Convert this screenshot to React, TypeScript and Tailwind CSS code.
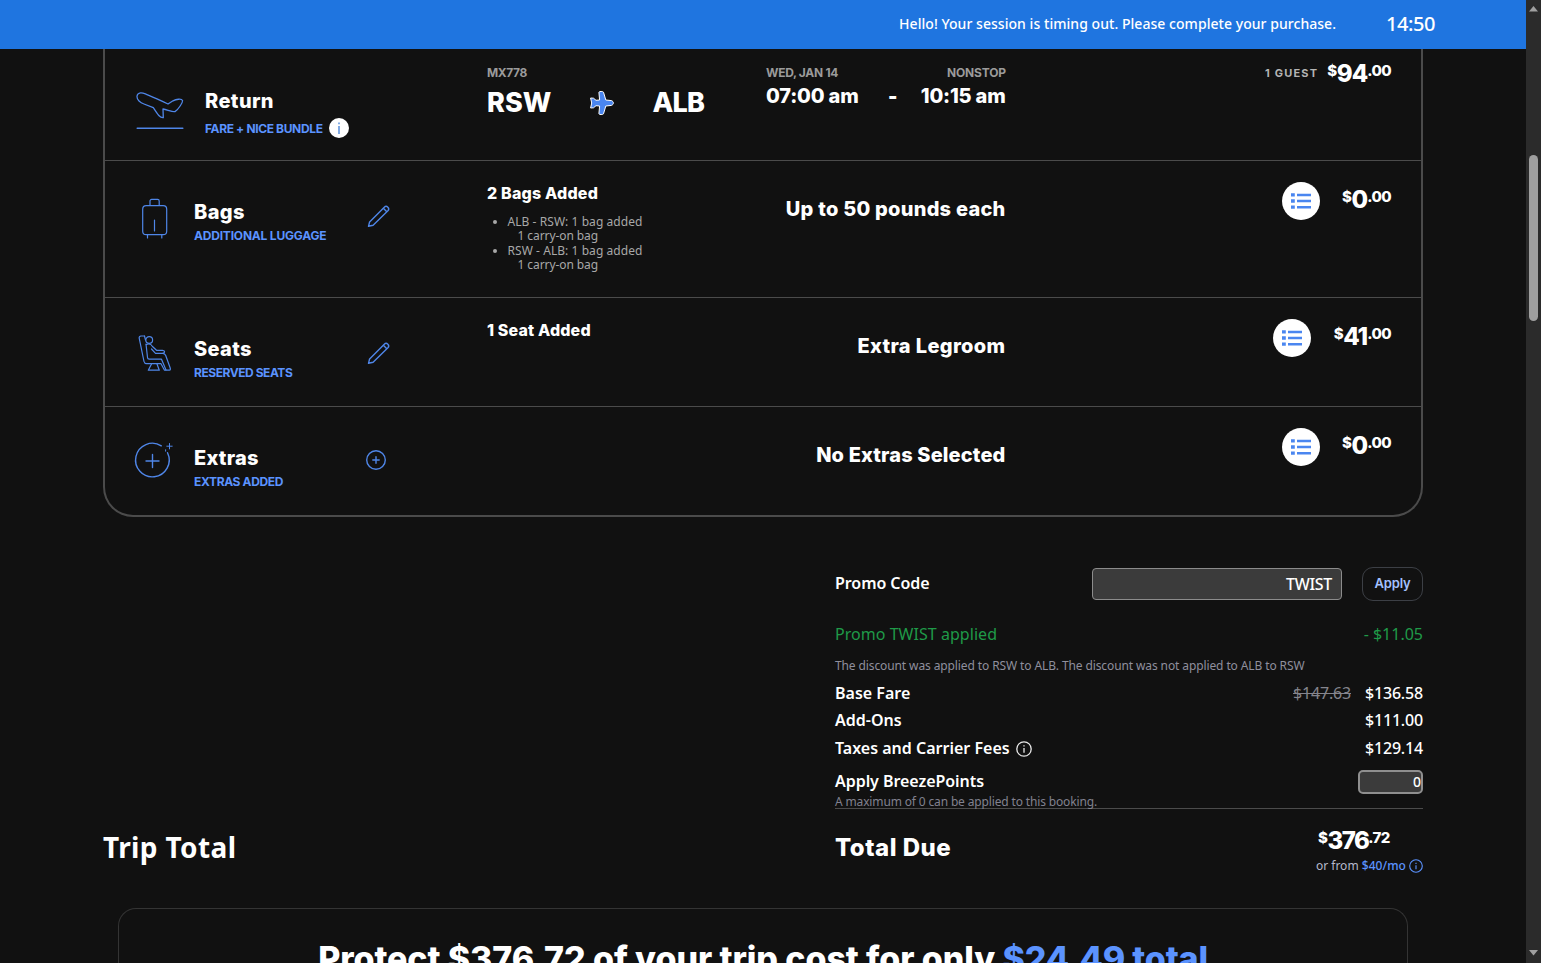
import type { ReactNode } from "react";

const BLUE = "#5b93ff";

function TakeoffIcon() {
  return (
    <svg width="48" height="44" viewBox="0 0 48 44" fill="none" stroke="#4f86e8" strokeWidth="1.3" strokeLinejoin="round" strokeLinecap="round">
      <path d="M3 13C0 10 .3 5.4 4.5 4.9C8 4.6 10 6 32 16L37 12.8C40 11.3 45.500 10.300 46.500 12.500C47.200 14 42 22 39 23.600C37.500 24.300 33 22.500 27 21L27.300 29.700C24 30 22 27 17.300 19.700L8 16C5 15 4 14 3 13Z" />
      <path d="M1.200 40.300H46.800" strokeWidth="1.500" />
    </svg>
  );
}

function SuitcaseIcon() {
  return (
    <svg width="30" height="43" viewBox="0 0 30 43" fill="none" stroke="#4f86e8" strokeWidth="1.2" strokeLinejoin="round" strokeLinecap="round">
      <rect x="2.700" y="8.700" width="24" height="29" rx="3.500" />
      <path d="M10 8.500V4A1.600 1.600 0 0 1 11.600 2.400H17.600A1.600 1.600 0 0 1 19.200 4V8.500" />
      <path d="M14.500 23V34M7.500 38V41M21.800 38V41" />
    </svg>
  );
}

function SeatIcon() {
  return (
    <svg width="38" height="42" viewBox="0 0 38 42" fill="none" stroke="#4f86e8" strokeWidth="1.2" strokeLinejoin="round" strokeLinecap="round" className="-mt-[2px]">
      <path d="M8.500 4H5A1.800 1.800 0 0 0 3.200 6.200L8 29.500A2.800 2.800 0 0 0 10.800 31.700H25L28.500 38.200H33.500C34.500 38.200 34.500 37 34.200 36L29.700 23.500A3.300 3.300 0 0 0 26.700 21.300H19.500L15.500 17" />
      <path d="M8.500 4L9.500 8M10 12L11.500 25.500A1.800 1.800 0 0 0 13.200 27.200H25.500L30 38" />
      <circle cx="13.200" cy="8" r="3.400" />
      <path d="M10.300 12.500C13 11.500 15.500 12.500 16.500 14.500L20.500 18.300H26.500C29.500 18.600 29 21 26.800 21.300" />
      <path d="M15.500 32L12.300 38.200H23.300L21 32" />
    </svg>
  );
}

function ExtrasIcon() {
  return (
    <svg width="42" height="42" viewBox="0 0 42 42" fill="none" stroke="#4f86e8" strokeWidth="1.400" strokeLinecap="round" className="-mt-1 mr-[2px]">
      <path d="M28.300 6.800A16.800 16.800 0 1 0 34.500 13.700" />
      <path d="M19.500 15.500V28.500M13 22H26" />
      <path d="M36.500 4.500V9.900M33.800 7.200H39.200" strokeWidth="1" />
      <path d="M32.600 10.800V12.200" strokeWidth="1" />
    </svg>
  );
}

function PencilIcon() {
  return (
    <svg width="24" height="24" viewBox="0 0 24 24" fill="none" stroke="#4f86e8" strokeWidth="1.400" strokeLinejoin="round">
      <path d="M1.500 22.300L2.600 17.900L17.300 3.200A2.400 2.400 0 0 1 20.900 6.700L6.100 21.200Z" />
      <path d="M16.300 4.300L19.800 7.800" />
    </svg>
  );
}

function PlusCircleIcon() {
  return (
    <svg width="22" height="22" viewBox="0 0 22 22" fill="none" stroke="#4f86e8" strokeWidth="1.400" strokeLinecap="round" className="-mt-px -ml-[2px]">
      <circle cx="11" cy="11" r="9.300" />
      <path d="M11 7.800V14.200M7.800 11H14.200" />
    </svg>
  );
}

function PlaneIcon() {
  return (
    <svg width="26" height="26" viewBox="-1 -1 26 26" fill="#4a86f0" stroke="#fff" strokeWidth="1" strokeLinejoin="round">
      <path d="M.6 7L3.500 7.200L6 9.300L9.600 9L8.900 1.200C9.200 .2 13 .2 13.500 1.200L15.800 9L21.500 9.600C24 10.600 24 13.400 21.500 14.400L15.800 15L13.500 22.800C13 23.800 9.200 23.800 8.900 22.800L9.600 15L6 14.700L3.500 16.800L.6 17L1.700 12Z" />
    </svg>
  );
}

function ListButton() {
  return (
    <button className="flex size-[38px] items-center justify-center rounded-full bg-white">
      <svg width="20" height="16" viewBox="0 0 20 16" fill="#4a86f0">
        <path d="M0 .2H3.800V3.600H0ZM6 .7H20V3.200H6ZM0 6.300H3.800V9.700H0ZM6 6.800H20V9.300H6ZM0 12.400H3.800V15.800H0ZM6 12.900H20V15.400H6Z" />
      </svg>
    </button>
  );
}

function InfoIcon({ size, color }: { size: number; color: string }) {
  return (
    <svg width={size} height={size} viewBox="0 0 16 16" fill="none" stroke={color} strokeWidth="1.300">
      <circle cx="8" cy="8" r="7.200" />
      <path d="M8 7V11.800M8 4.200V5.600" />
    </svg>
  );
}

function Price({ whole, cents, tight }: { whole: string; cents: string; tight?: boolean }) {
  return (
    <div className="flex h-6 items-start font-[Inter] font-extrabold text-white">
      <span className="w-[9.500px] text-[15px] leading-[19px]">$</span>
      <span className={tight ? "text-[24px] leading-[26px] tracking-[-1.5px]" : "text-[24px] leading-[26px] tracking-[-1px]"}>{whole}</span>
      <span className="text-[15px] leading-[19px] tracking-[-0.6px]">{cents}</span>
    </div>
  );
}

type RowProps = {
  icon: ReactNode;
  title: string;
  titleClass: string;
  subtitle: string;
  subtitleClass: string;
  action: ReactNode;
  heading?: string;
  headingClass?: string;
  details?: ReactNode;
  summary: string;
  summaryClass: string;
  whole: string;
  priceClass: string;
  rowClass: string;
};

function AddOnRow(p: RowProps) {
  return (
    <section className={"grid grid-cols-[382px_519px_385px] " + p.rowClass}>
      <div className="flex">
        <div className="flex w-[89px] justify-center pt-9 pr-[9px] pl-5">{p.icon}</div>
        <div className="w-[173px] pt-[39px] font-[Inter] whitespace-nowrap">
          <h2 className={"text-[20px] leading-6 font-extrabold text-white " + p.titleClass}>{p.title}</h2>
          <p className={"text-[12px] leading-6 font-bold text-[#5b93ff] " + p.subtitleClass}>{p.subtitle}</p>
        </div>
        <div className="pt-[43px]">{p.action}</div>
      </div>
      <div className="flex justify-between">
        <div className="pt-5">
          {p.heading && <h3 className={"font-[Inter] text-[16px] leading-6 font-extrabold text-white " + p.headingClass}>{p.heading}</h3>}
          {p.details}
        </div>
        <p className={"pt-9 pr-[0.5px] font-[Inter] text-[20px] leading-6 font-extrabold text-white " + p.summaryClass}>{p.summary}</p>
      </div>
      <div className={"flex items-start justify-end pt-[21px] " + p.priceClass}>
        <ListButton />
        <div className="pt-[5px]">
          <Price whole={p.whole} cents=".00" />
        </div>
      </div>
    </section>
  );
}

export default function App() {
  return (
    <div className="flex h-[963px] w-[1541px] overflow-hidden bg-[#111111] font-['Noto_Sans',sans-serif] text-white">
      <div className="flex w-[1526px] flex-col">
        <header className="flex h-[49px] shrink-0 items-center justify-end bg-[#1f75e0] pr-[91px] pb-px whitespace-nowrap">
          <p className="pb-px text-[14px] font-medium tracking-[0.045px]">Hello! Your session is timing out. Please complete your purchase.</p>
          <p className="ml-[50px] text-[20px] font-medium tracking-[-0.45px]">14:50</p>
        </header>

        <main className="ml-[103px] flex w-[1320px] flex-col">
          <div className="rounded-b-[30px] border-2 border-t-0 border-[#4b4b4b]">
            <section className="grid h-28 grid-cols-[382px_519px_385px] border-b border-[#4b4b4b]">
              <div className="flex">
                <div className="w-[100px] pt-[39px] pl-[31px]"><TakeoffIcon /></div>
                <div className="pt-10 font-[Inter] whitespace-nowrap">
                  <h2 className="text-[20px] leading-6 font-extrabold tracking-[0.4px]">Return</h2>
                  <div className="mt-1 flex items-center gap-[6px]">
                    <p className="pt-[2px] text-[12px] leading-5 font-bold tracking-[-0.36px] text-[#5b93ff]">FARE + NICE BUNDLE</p>
                    <span className="flex size-5 items-center justify-center rounded-full bg-white">
                      <svg width="4" height="12" viewBox="0 0 4 12" stroke="#3f7fd8" strokeWidth="1.300"><path d="M2 4V12M2 .5V2.200" /></svg>
                    </span>
                  </div>
                </div>
              </div>
              <div className="flex justify-between pt-4 font-[Inter] font-bold whitespace-nowrap">
                <div>
                  <p className="text-[12px] leading-4 tracking-[-0.4px] text-[#9b9b9b]">MX778</p>
                  <div className="flex items-center pt-[6px] leading-8 font-extrabold">
                    <span className="w-[102px] text-[27px]">RSW</span>
                    <span className="w-[63.5px]"><PlaneIcon /></span>
                    <span className="text-[27px] tracking-[-0.8px]">ALB</span>
                  </div>
                </div>
                <div className="w-[240px]">
                  <div className="flex justify-between text-[12px] leading-4 text-[#9b9b9b]">
                    <p className="tracking-[-0.3px]">WED, JAN 14</p>
                    <p className="tracking-[-0.15px]">NONSTOP</p>
                  </div>
                  <div className="flex justify-between pt-[3px] text-[20px] leading-6 font-extrabold">
                    <p className="tracking-[-0.18px]">07:00 am</p>
                    <p className="pl-[6px] font-black">-</p>
                    <p className="pr-[0.5px] tracking-[-0.2px]">10:15 am</p>
                  </div>
                </div>
              </div>
              <div className="flex items-start justify-end pt-3">
                <p className="pr-[9px] font-[Inter] text-[11px] leading-6 font-bold tracking-[1.200px] text-[#b4b4b4]">1 GUEST</p>
                <Price whole="94" cents=".00" />
              </div>
            </section>

            <AddOnRow
              rowClass="h-[137px] border-b border-[#4b4b4b]"
              icon={<SuitcaseIcon />}
              title="Bags"
              titleClass="tracking-[0.4px]"
              subtitle="ADDITIONAL LUGGAGE"
              subtitleClass="tracking-[-0.2px]"
              action={<PencilIcon />}
              heading="2 Bags Added"
              headingClass="tracking-[0.2px]"
              details={
                <ul className="pt-[10px] text-[12px] leading-[14.3px] whitespace-nowrap text-[#a8a8a8]">
                  {["ALB - RSW: 1 bag added", "RSW - ALB: 1 bag added"].map((text) => (
                    <li key={text}>
                      <p className="flex items-center tracking-[0.060px]">
                        <span className="mr-[10.5px] ml-[6px] size-1 rounded-full bg-[#a8a8a8]" />
                        {text}
                      </p>
                      <p className="pl-[30.5px] tracking-[-0.08px]">1 carry-on bag</p>
                    </li>
                  ))}
                </ul>
              }
              summary="Up to 50 pounds each"
              summaryClass="tracking-[0.24px]"
              whole="0"
              priceClass="gap-[22px]"
            />
            <AddOnRow
              rowClass="h-[109px] border-b border-[#4b4b4b]"
              icon={<SeatIcon />}
              title="Seats"
              titleClass="tracking-[0.35px]"
              subtitle="RESERVED SEATS"
              subtitleClass="tracking-[-0.45px]"
              action={<PencilIcon />}
              heading="1 Seat Added"
              headingClass="tracking-[0.15px]"
              summary="Extra Legroom"
              summaryClass="tracking-[0.36px]"
              whole="41"
              priceClass="gap-[23px]"
            />
            <AddOnRow
              rowClass="h-[108px]"
              icon={<ExtrasIcon />}
              title="Extras"
              titleClass="tracking-[0.25px]"
              subtitle="EXTRAS ADDED"
              subtitleClass="tracking-[-0.35px]"
              action={<PlusCircleIcon />}
              summary="No Extras Selected"
              summaryClass="tracking-[0.15px]"
              whole="0"
              priceClass="gap-[22px]"
            />
          </div>

          <div className="ml-[732px] flex flex-col text-[16px] font-medium whitespace-nowrap">
            <div className="mt-[50px] flex h-[34px] items-center">
              <label className="pb-[2px] font-semibold tracking-[-0.06px]">Promo Code</label>
              <div className="ml-auto flex h-8 w-[250px] items-center justify-end rounded-[4px] border border-[#8c8c8c] bg-[#3b3b3b] pr-[9px] tracking-[-0.3px]">TWIST</div>
              <button className="ml-5 h-[34px] w-[61px] rounded-[11px] border border-[#3c3f45] font-[Inter] text-[13px] font-semibold tracking-[-0.17px] text-[#a3c1ff]">Apply</button>
            </div>
            <div className="mt-[21px] flex h-6 justify-between font-normal text-[#1f9a48]">
              <p className="tracking-[0.04px]">Promo TWIST applied</p>
              <p>- $11.05</p>
            </div>
            <p className="mt-[10px] h-5 text-[12px] leading-5 font-normal tracking-[-0.108px] text-[#8f8f9d]">The discount was applied to RSW to ALB. The discount was not applied to ALB to RSW</p>
            <div className="mt-[3px] flex h-[27px] items-center">
              <p className="font-semibold">Base Fare</p>
              <p className="ml-auto font-normal tracking-[-0.18px] text-[#85858d] line-through">$147.63</p>
              <p className="ml-[14px] tracking-[-0.18px]">$136.58</p>
            </div>
            <div className="flex h-[27px] items-center justify-between">
              <p className="font-semibold">Add-Ons</p>
              <p className="tracking-[-0.18px]">$111.00</p>
            </div>
            <div className="mt-px flex h-7 items-center">
              <p className="mr-[6px] font-semibold">Taxes and Carrier Fees</p>
              <span className="pt-px"><InfoIcon size={16} color="#e8e8e8" /></span>
              <p className="ml-auto tracking-[-0.18px]">$129.14</p>
            </div>
            <div className="mt-2 flex h-6 items-center justify-between">
              <p className="pb-[2px] font-semibold tracking-[-0.05px]">Apply BreezePoints</p>
              <div className="flex h-6 w-[65px] items-center justify-end rounded-[5px] border-2 border-[#8f8f8f] bg-[#3b3b3b] pb-px text-[14px]">0</div>
            </div>
            <p className="h-[15px] border-b border-[#4b4b4b] text-[12px] leading-[15px] font-normal tracking-[-0.147px] text-[#81818f]">A maximum of 0 can be applied to this booking.</p>
          </div>

          <div className="flex h-[99px] pt-[18px] whitespace-nowrap">
            <h2 className="w-[732px] text-[28px] leading-10 font-bold tracking-[0.38px]">Trip Total</h2>
            <h2 className="pt-px font-[Inter] text-[24px] leading-10 font-extrabold tracking-[0.5px]">Total Due</h2>
            <div className="ml-auto flex flex-col">
              <div className="pt-px pl-[2px]"><Price whole="376" cents=".72" tight /></div>
              <div className="mt-1 flex h-5 items-center text-[12px]">
                <p className="mr-[3px] text-[#b5b9cb]">or from <span className="font-medium tracking-[0.06px] text-[#5b93ff]">$40/mo</span></p>
                <InfoIcon size={14} color={BLUE} />
              </div>
            </div>
          </div>

          <div className="mx-[15px] h-[120px] shrink-0 rounded-t-[18px] border border-b-0 border-[#343434] pt-[26px] text-center font-[Inter] text-[34px] leading-[48px] font-extrabold whitespace-nowrap">
            <span className="tracking-[-0.08px]">Protect $376.72 of your trip cost for only </span>
            <span className="tracking-[-0.2px] text-[#5b93ff]">$24.49 total</span>
          </div>
        </main>
      </div>

      <aside className="flex w-[15px] flex-col items-center bg-[#2b2b2b]">
        <svg width="9" height="6" viewBox="0 0 9 6" fill="#a0a0a0" className="mt-[6px]"><path d="M4.500 0L9 5.500H0Z" /></svg>
        <div className="mt-[143px] h-[166px] w-[9px] rounded-full bg-[#9f9f9f]" />
        <svg width="9" height="6" viewBox="0 0 9 6" fill="#a0a0a0" className="mt-auto mb-[7px]"><path d="M4.500 5.500L9 0H0Z" /></svg>
      </aside>
    </div>
  );
}
